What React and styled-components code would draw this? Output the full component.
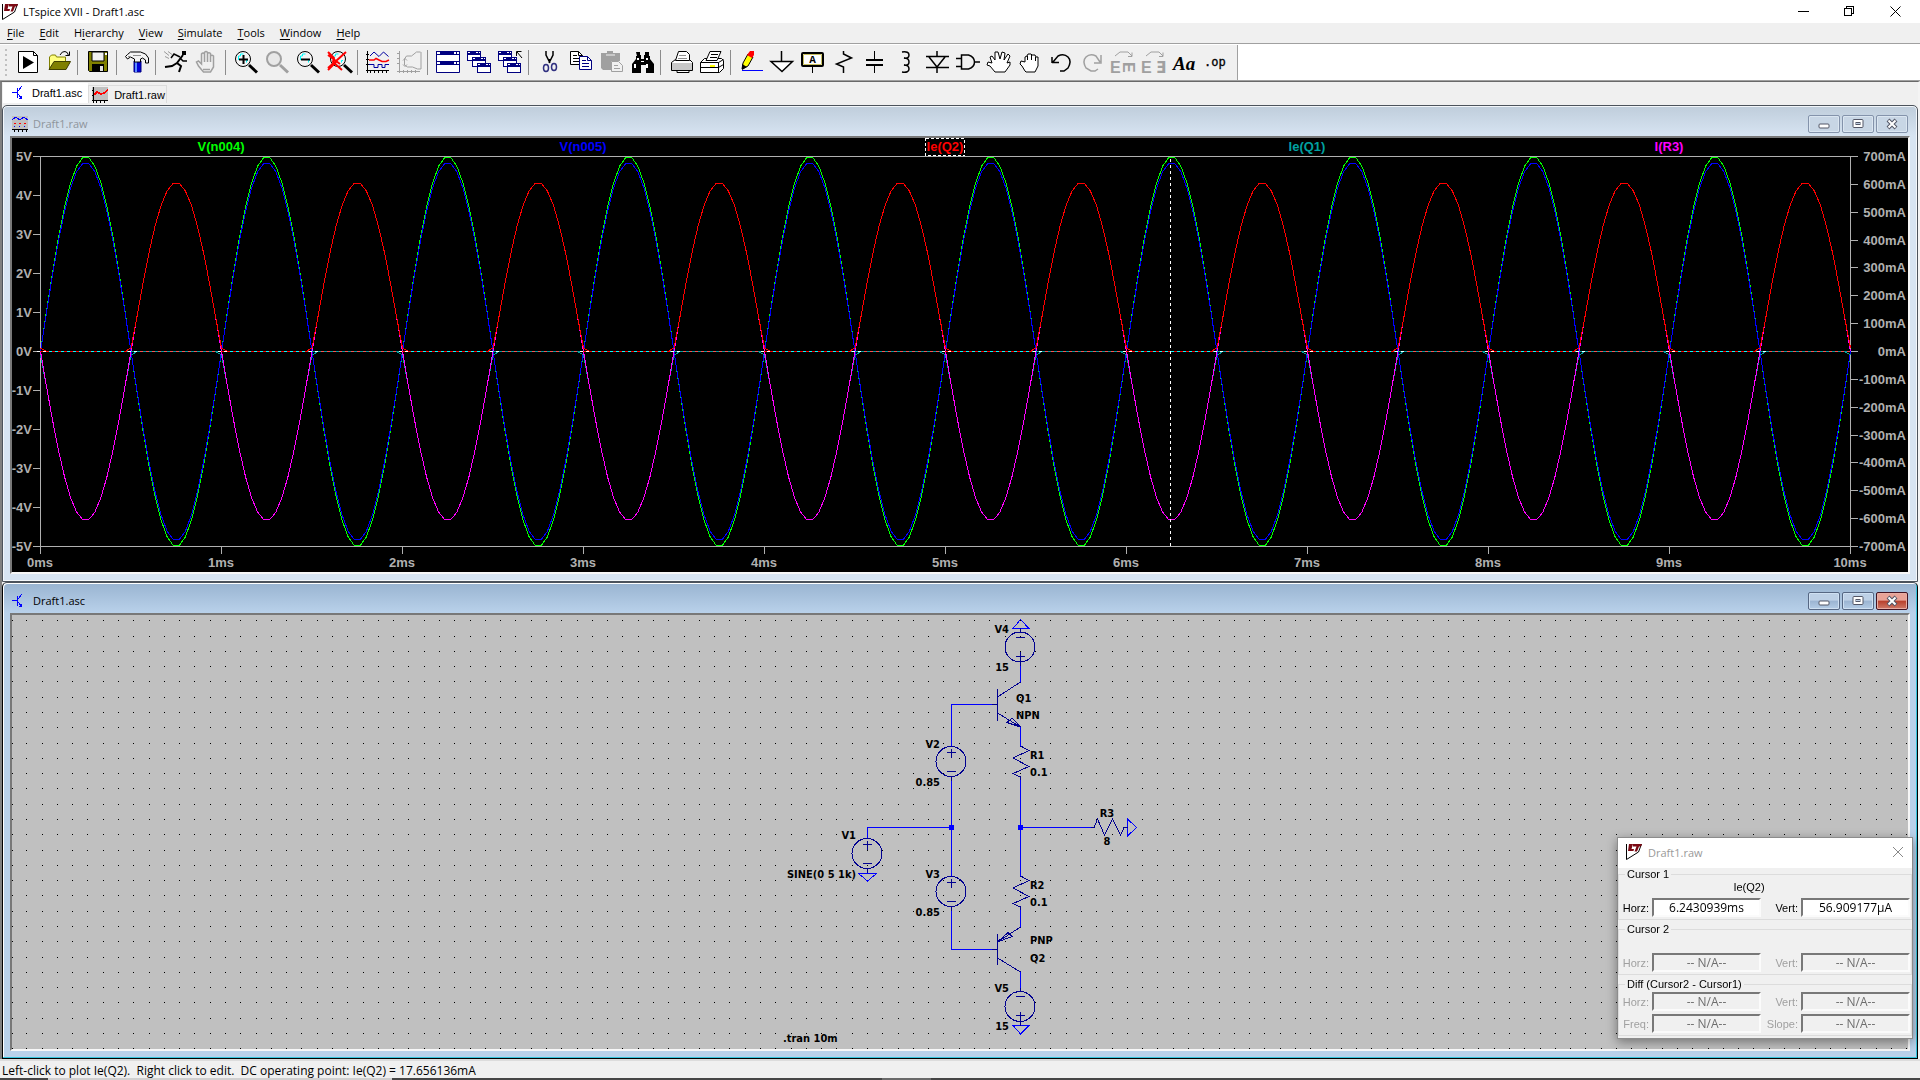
import React, { useLayoutEffect, useRef, useState } from 'react';
import styled, { createGlobalStyle, css } from 'styled-components';

const GlobalStyle = createGlobalStyle`
	* {
		box-sizing: border-box;
	}

	body {
		margin: 0;
		background: #f0f0f0;
		color: #000;
		font-family: 'Open Sans', 'Noto Sans', sans-serif;
		font-size: 12px;
	}

	button {
		padding: 0;
		border: 0;
		background: none;
		color: inherit;
		font: inherit;
	}

	svg {
		display: block;
	}
`;

const Shell = styled.div`
	display: flex;
	flex-direction: column;
	height: 100vh;
	min-height: 600px;
	overflow: hidden;
`;

const AppTitle = styled.header`
	display: flex;
	align-items: center;
	height: 23px;
	padding: 0 2px;
	gap: 5px;
	background: #fff;
`;

const TitleText = styled.h1`
	flex: 1;
	margin: 0;
	font-size: 11px;
	font-weight: 400;
`;

const CaptionButton = styled.button`
	display: flex;
	align-items: center;
	justify-content: center;
	width: 46px;
	height: 21px;
	margin-right: ${(props) => (props.$close ? '0' : '-5px')};
`;

const MenuBar = styled.nav`
	display: flex;
	gap: 1px;
	height: 21px;
	border-bottom: 1px solid #a0a0a0;
`;

const MenuItem = styled.button`
	padding: 0 7px;
	font-size: 11px;
	line-height: 18px;

	u {
		text-underline-offset: 2px;
	}
`;

const ToolbarRow = styled.div`
	display: flex;
	height: 37px;
	border-top: 1px solid #fff;
	border-bottom: 1px solid #a0a0a0;
	background: #fff;
`;

const Toolbar = styled.div`
	display: flex;
	align-items: center;
	padding-right: 6px;
	border-right: 1px solid #a0a0a0;
	background: #f0f0f0;
`;

const Grip = styled.div`
	width: 2px;
	height: 28px;
	margin: 0 5px;
	background: repeating-linear-gradient(#c0c0c0 0 2px, transparent 2px 5px);
`;

const Separator = styled.div`
	width: 1px;
	height: 25px;
	margin: 0 4px 0 3px;
	background: #8c8c8c;
`;

const ToolButton = styled.button`
	display: flex;
	align-items: center;
	justify-content: center;
	width: 31px;
	height: 31px;

	svg {
		overflow: visible;
	}
`;

const Workspace = styled.main`
	display: flex;
	flex: 1;
	flex-direction: column;
	min-height: 0;
	border: solid;
	border-width: 1px 2px 0 2px;
	border-color: #696969 #f4f4f4 #fff #808080;
`;

const TabStrip = styled.div`
	display: flex;
	align-items: flex-end;
	height: 23px;
	padding: 1px 0 2px 1px;
`;

const Tab = styled.button`
	display: flex;
	align-items: center;
	gap: ${(props) => (props.$active ? '4px' : '6px')};
	height: ${(props) => (props.$active ? '20px' : '18px')};
	padding: ${(props) => (props.$active ? '0 5px 2px 8px' : '0 1px 0 3px')};
	border: 1px solid ${(props) => (props.$active ? '#fff' : '#dcdcdc')};
	border-width: 1px 1px 0;
	background: ${(props) => (props.$active ? '#fff' : '#f0f0f0')};
	font: 11px 'Liberation Sans', Arial, sans-serif;
`;

const MdiWindow = styled.section`
	display: flex;
	flex: 1;
	flex-direction: column;
	min-height: 0;
	padding: 0 7px 7px;
	border: 1px solid ${(props) => (props.$active ? '#000' : '#4c535c')};
	border-top-color: #4c535c;
	border-radius: 5px 5px 0 0;
	box-shadow: ${(props) =>
		props.$active ? 'inset -1px -1px #35c4dc, inset 1px 1px #fff' : 'inset 0 0 0 1px #f2f6fa'};
	background: ${(props) =>
		props.$active
			? 'linear-gradient(#99b4d1, #b9d1ea 30px)'
			: 'linear-gradient(#bfcddb, #d7e4f2 30px)'};
`;

const MdiTitle = styled.div`
	display: flex;
	align-items: center;
	height: 30px;
	padding: 5px 2px 0;
	gap: 5px;
	color: ${(props) => (props.$active ? '#000' : '#8e959c')};

	h2 {
		flex: 1;
		margin: 0;
		font-size: 11px;
		font-weight: 400;
	}
`;

const MdiButton = styled.button`
	display: flex;
	align-items: center;
	justify-content: center;
	width: 32px;
	height: 18px;
	margin-left: -3px;
	border: 1px solid #8493ab;
	border-radius: 2px;
	background: #c8d6e5;
	box-shadow: inset 0 0 0 1px #dbe6f1;

	${(props) =>
		props.$active &&
		css`
			border-color: #566783;
			background: linear-gradient(#bdd0e6 45%, #9bb4d2 50%, #b4cce6);
			box-shadow: inset 0 0 0 1px #cfe0f2;
		`}

	${(props) =>
		props.$danger &&
		css`
			border-color: #431422;
			background: linear-gradient(#e8a397 45%, #b8402c 50%, #cf7a68);
			box-shadow: inset 0 0 0 1px #e7ada3;
		`}
`;

const MdiClient = styled.div`
	flex: 1;
	min-height: 0;
	overflow: hidden;
	border: 2px solid;
	border-color: #787878 #f7f7f7 #f7f7f7 #787878;
	background: ${(props) => props.$color};

	svg {
		width: 100%;
		height: 100%;
	}
`;

const StatusBar = styled.footer`
	height: 19px;
	padding-left: 2px;
	border-top: 2px solid #dcdcdc;
	line-height: 20px;
	white-space: pre;
`;

const ScreenEdge = styled.div`
	height: 2px;
	background: linear-gradient(
		90deg,
		#464646 48px,
		#d0d0d0 48px 392px,
		#464646 392px 882px,
		#6a6a6a 882px 931px,
		#464646 931px
	);
`;

const PlotText = styled.text`
	font: bold 13px 'Liberation Sans', Arial, sans-serif;
	fill: ${(props) => props.$color || '#b0b0b0'};
	text-anchor: ${(props) => props.$anchor || 'middle'};
`;

const NetText = styled.text`
	font: bold 11px 'DejaVu Sans Condensed', Tahoma, sans-serif;
	fill: #000;
	text-anchor: ${(props) => props.$anchor || 'start'};
`;

const CursorDialog = styled.aside`
	position: fixed;
	right: 7px;
	bottom: 41px;
	width: 296px;
	height: 202px;
	border: 1px solid #8c8c8c;
	background: #f0f0f0;
	box-shadow: 0 3px 10px rgba(0, 0, 0, 0.4);
`;

const DialogTitle = styled.div`
	display: flex;
	align-items: center;
	height: 30px;
	padding: 0 8px 2px;
	gap: 6px;
	background: #fff;
	color: #999;

	h2 {
		flex: 1;
		margin: 0;
		font-size: 11px;
		font-weight: 400;
	}
`;

const Group = styled.fieldset`
	min-width: 0;
	margin: 0 0 3px;
	padding: 0 0 2px;
	border: 1px solid #dcdcdc;
	font-family: 'Liberation Sans Narrow', 'Liberation Sans', sans-serif;
	font-size: 11px;

	legend {
		margin-left: 6px;
		padding: 0 2px;
		line-height: 12px;
	}
`;

const TraceName = styled.div`
	height: 16px;
	padding-right: 32px;
	line-height: 14px;
	text-align: center;
`;

const Fields = styled.div`
	display: grid;
	grid-template-columns: 29px 109px 34px 109px;
	gap: 3px;
	align-items: center;
	justify-content: end;
	padding: 2px 1px 0 0;

	label {
		color: ${(props) => (props.$off ? '#a0a0a0' : '#000')};
		text-align: right;
		white-space: nowrap;
	}

	input {
		width: 100%;
		height: 19px;
		padding: 0;
		border: 2px solid;
		border-color: #787878 #fbfbfb #fbfbfb #787878;
		background: ${(props) => (props.$off ? '#f0f0f0' : '#fff')};
		color: ${(props) => (props.$off ? '#6d6d6d' : '#000')};
		font: 12px 'Open Sans', sans-serif;
		text-align: center;
	}
`;

function useSize() {
	const ref = useRef(null);
	const [ size, setSize ] = useState({ width: 0, height: 0 });

	useLayoutEffect(() => {
		const measure = () => {
			setSize({ width: ref.current.clientWidth, height: ref.current.clientHeight });
		};
		measure();
		window.addEventListener('resize', measure);
		return () => window.removeEventListener('resize', measure);
	}, []);

	return [ ref, size ];
}

/* ---------- icons ---------- */

const lens = (
	<>
		<circle cx="10" cy="9" r="7.5" fill="#f4f4f4" stroke="#000" />
		<path d="M5.5 10v-4h2v-2h3M13.500 12.500v-2h1.500" fill="none" stroke="#0ff" />
		<path d="M16 15l8 7.500" stroke="#000" strokeWidth="3" />
	</>
);

const sheet = (x, y, color) => (
	<g transform={`translate(${x} ${y})`}>
		<path d="M.5 .5h8l4 4v9h-12z" fill="#fff" stroke={color} />
		<path d="M8.500 .5v4h4M3 4.500h4M3 7.500h7M3 10.500h7" fill="none" stroke={color} />
	</g>
);

const miniWindow = (x, y) => (
	<g transform={`translate(${x} ${y})`}>
		<rect x=".5" y=".5" width="13" height="9" fill="#fff" stroke="#000080" />
		<path d="M0 0h14v4h-14z" fill="#000080" />
		<path d="M1 1h2v1h-2zM9 1h2v1h-2zM12 1h1v1h-1z" fill="#fff" />
	</g>
);

const ICONS = {
	run: (
		<>
			<path d="M3.500 1.500h15l4 4v17h-19z" fill="#fff" stroke="#000" />
			<path d="M18.500 1.500v4h4" fill="none" stroke="#000" />
			<path d="M8 6l11 6.500l-11 6.500z" />
		</>
	),
	open: (
		<>
			<path d="M3.500 19v-12l2-2h4l1 2h9v5h-10z" fill="#ffff80" stroke="#808000" />
			<path d="M3 19.500l5-8h16.500l-4.500 8z" fill="#808000" stroke="#404000" />
			<path d="M14 5q2-4 5-3.500t3.500 4M19.500 5.500h4v-4" fill="none" stroke="#000" />
		</>
	),
	save: (
		<>
			<path d="M3.500 1.500h19v20h-18l-1-1z" fill="#808000" stroke="#000" />
			<path d="M7 2h12v9h-12z" fill="#f0f0f0" stroke="#000" />
			<path d="M7 14h12v7.500h-12z" />
			<path d="M15 16h3v5h-3z" fill="#e0e0e0" />
			<path d="M20 3h2v2h-2z" fill="#fff" />
		</>
	),
	hammer: (
		<>
			<path d="M10 11h7v11h-7z" fill="#0000d8" stroke="#000080" />
			<path d="M12 12v10" stroke="#5a8cff" strokeWidth="2" />
			<path d="M1.500 6.500l2-2 3-2.500h10l5 2 3 4v5h-3v-3l-3-2-2 1v3h-6v-3l-4-2-3 2z" fill="#f4f4f4" stroke="#000" />
			<path d="M9 5.500h8M4 6.500h3" stroke="#909090" />
		</>
	),
	runner: (
		<>
			<path d="M19 1h4v4h-4z" />
			<path d="M20 5l-6 8l4 3l-2 6M14 13l-5 3l-7 1" fill="none" stroke="#000" strokeWidth="2" />
			<path d="M17 7l-6-3l-3 4M17 8l3 3h4" fill="none" stroke="#000" strokeWidth="1.500" />
			<path d="M1 1.500l5 4M5 1.500l4 3M2 6.500l4 2" stroke="#999" />
		</>
	),
	halt: (
		<path
			d="M7.500 13v-9q1.500-2 3 0v-1.500q1.500-2 3 0v1q1.500-1.500 3 0v2.500q1.500-1.500 3 0v11l-3 5h-7l-5-6l-2-4l2-1l3 3zM10.500 4v8M13.500 3v9M16.500 5v7M9 19.500h7"
			fill="#f0f0f0"
			stroke="#a0a0a0"
			strokeWidth="1.500"
		/>
	),
	zoomIn: (
		<>
			{lens}
			<path d="M6 9.500h9M10.500 5v9" stroke="#000" strokeWidth="2" />
		</>
	),
	zoomPan: (
		<>
			<circle cx="10" cy="9" r="7" fill="#e8e8e8" stroke="#a0a0a0" strokeWidth="2" />
			<path d="M16 15l8 7.500" stroke="#a0a0a0" strokeWidth="3" />
		</>
	),
	zoomOut: (
		<>
			{lens}
			<path d="M6 9.500h9" stroke="#000" strokeWidth="2" />
		</>
	),
	zoomFit: (
		<>
			<g transform="translate(2 0)">{lens}</g>
			<path d="M2 2l6 6l-1 4l9 8M20 2l-10 9l-8 7M2 5l12 9M2 20l8-8" fill="none" stroke="#f00" strokeWidth="2" />
		</>
	),
	plot: (
		<>
			<path d="M2.500 1v22M1 20.500h23M1 4.500h3M1 9.500h3M1 14.500h3M5.500 20v3M9.500 20v3M13.500 20v3M17.500 20v3M21.500 20v3" stroke="#000" />
			<path d="M5 6l4-4l5 4.500l4.500-4.500l5 4.500M4 14.500h5v3h4v-3h4v3h3v-3h4" fill="none" stroke="#0000a0" />
			<path d="M4 10h5l2-1.500l6 3h4l3-1.500" fill="none" stroke="#f00" strokeWidth="1.500" />
		</>
	),
	fft: (
		<>
			<path d="M3.500 1v22M1 21.500h23M1 3.500h3M1 8.500h3M1 13.500h3M7.500 20v3M11.500 20v3M15.500 20v3M19.500 20v3" stroke="#a0a0a0" />
			<path d="M24.500 2h-4l-5 4h-5l-2 3v6l3 2h5l5 2h3.500v-17M7 10.500l2-2 2 2M7 14.500l2 2 2-2" fill="none" stroke="#a0a0a0" />
		</>
	),
	tile: (
		<>
			<path d="M1.500 1.500h23v21h-23z" fill="#fff" stroke="#000080" />
			<path d="M1 1h24v4h-24zM1 11h24v4h-24z" fill="#000080" />
			<path d="M2 2h3v2h-3zM19 2h2v2h-2zM22 2h2v2h-2zM2 12h3v2h-3zM19 12h2v2h-2zM22 12h2v2h-2z" fill="#fff" />
		</>
	),
	cascade: (
		<>
			{miniWindow(1, 1)}
			{miniWindow(6, 7)}
			{miniWindow(11, 13)}
		</>
	),
	closeAll: (
		<>
			{miniWindow(1, 1)}
			{miniWindow(6, 7)}
			{miniWindow(10, 13)}
			<path d="M16 0h9v7h-9z" fill="#f0f0f0" />
			<path d="M19.500 6v-4.500h5M20 2l5 6" fill="none" stroke="#000" />
		</>
	),
	cut: (
		<>
			<path d="M10 1v4l4 8M17 1v4l-4 8M13.500 9v4" fill="none" stroke="#000" strokeWidth="1.500" />
			<ellipse cx="10" cy="18" rx="2.500" ry="3.500" fill="none" stroke="#303080" strokeWidth="1.500" />
			<ellipse cx="18" cy="17" rx="2.500" ry="3.500" fill="none" stroke="#303080" strokeWidth="1.500" />
		</>
	),
	copy: (
		<>
			{sheet(3, 1, '#000')}
			{sheet(12, 6, '#000080')}
		</>
	),
	paste: (
		<>
			<path d="M3 3h6v-2h6v2h7v8h-9v9h-8l-2-2z" fill="#a0a0a0" />
			<path d="M8 5h9" stroke="#f0f0f0" />
			<path d="M13.500 11.500h7l4 4v6h-11zM16 15.500h4M16 18.500h6" fill="#f0f0f0" stroke="#a0a0a0" />
		</>
	),
	find: (
		<>
			<path d="M7 2h4v3h1v4h3v-4h1v-3h4v4h1v3l4 5v9h-8v-8h-5v8h-9v-9l4-5v-3h1z" />
			<path d="M8 8h2v2h-2zM17 8h2v2h-2zM5 14h2v4h-2zM17 14h2v4h-2zM12 11h3v1h-3z" fill="#fff" />
		</>
	),
	print: (
		<>
			<path d="M3.500 12.500l4-3h14l3 3v8h-21z" fill="#fff" stroke="#000" />
			<path d="M4 13h20v7h-20z" fill="#c8c8c8" />
			<path d="M7.500 10.500l3-9h8l3 3v6zM9 20.500h12v2h-12z" fill="#fff" stroke="#000" />
			<path d="M11 5.500h7M10 8.500h9" stroke="#909090" />
		</>
	),
	printSetup: (
		<>
			<path d="M1.500 12.500l4-4h17l2 2v8l-4 4h-19zM1.500 12.500h18v10M19.500 12.500l5-3M1.500 17.500h18l5-3" fill="#fff" stroke="#000" />
			<path d="M7 10.500l4-9h11l-4 9zM12 4.500h7M11 7.500h7" fill="#fff" stroke="#000" />
			<path d="M11 15h5v2h-5z" fill="#ff0" />
		</>
	),
	wire: (
		<>
			<path d="M4 19l1-6l5-9l5 3l-5 9z" fill="#ff0" stroke="#000" />
			<path d="M4 20v-6l5 3z" />
			<path d="M9 5l3-4h4v4l-2 3z" fill="#f00" />
			<path d="M4 20.500h21" stroke="#00f" />
		</>
	),
	ground: (
		<path d="M12.500 1v10M2 11.500h21.500l-10.500 10z" fill="#fff" stroke="#000" strokeWidth="1.500" />
	),
	label: (
		<>
			<rect x="2" y="3" width="21" height="13" rx="1" fill="#fff" stroke="#000" strokeWidth="2" />
			<path d="M3.500 4.500h18v10h-18z" fill="none" stroke="#c8c060" />
			<path d="M12.500 17v6" stroke="#000" />
			<text x="12.500" y="13" fontFamily="Liberation Mono" fontWeight="700" fontSize="11" textAnchor="middle">A</text>
		</>
	),
	resistor: <path d="M12.500 1v3l8 4l-15 6l7 3v6" fill="none" stroke="#000" strokeWidth="1.500" />,
	capacitor: (
		<>
			<path d="M12.500 1v9M12.500 15v8" stroke="#000" />
			<path d="M4 10h17M4 15h17" stroke="#000" strokeWidth="2" />
		</>
	),
	inductor: (
		<path d="M9 2q7-1 7 3t-5 3q5 0 5 4t-5 3q5 0 5 4t-7 3" fill="none" stroke="#000" strokeWidth="1.500" />
	),
	diode: <path d="M13 1v5M2 6.500h23M5 7l8 10l8-10M2 17.500h23M13 17v6" fill="none" stroke="#000" strokeWidth="1.500" />,
	gate: (
		<path d="M6.500 5h7q6 2 6 7t-6 7h-7zM1 8.500h5M1 16.500h5M20 12h5" fill="none" stroke="#000" strokeWidth="1.500" />
	),
	move: (
		<path
			d="M9 22l-5-6l-3-1l1-3l4 1l-2-6l2-1l3 4v-8h3l2 7l2-7l3 1l-1 7l4-6l2 2l-3 7l3-1v3l-5 7h-10z"
			fill="#fff"
			stroke="#000"
		/>
	),
	drag: (
		<path
			d="M8 21l-3-5l-2-2l1-3l4 1v-5l2-1l1-2h3l1 1h3l1 2h2v9l-3 6h-9zM10.500 6v4M14.500 5v5M18.500 7v4"
			fill="#fff"
			stroke="#000"
		/>
	),
	undo: (
		<path d="M4 13v-6M4 12.500h7M5 12l5-6q6-3 10 1t0 11l-4 3h-4" fill="none" stroke="#000" strokeWidth="1.500" />
	),
	redo: (
		<path d="M22 5v8h-7M21 12l-4-6q-6-3-10 1t0 11l5 3h4l3-2" fill="none" stroke="#a0a0a0" strokeWidth="1.500" />
	),
	rotate: (
		<>
			<path d="M5 6l5-4h8l4 4M18 6.500h4v-4" fill="none" stroke="#a0a0a0" />
			<text x="0" y="23" fontFamily="Liberation Sans" fontWeight="700" fontSize="16" fill="#a0a0a0">E</text>
			<text transform="translate(13 12) rotate(90)" fontFamily="Liberation Sans" fontWeight="700" fontSize="16" fill="#a0a0a0">E</text>
		</>
	),
	mirror: (
		<>
			<path d="M5 6l5-4h8l4 4M18 6.500h4v-4" fill="none" stroke="#a0a0a0" />
			<text x="0" y="23" fontFamily="Liberation Sans" fontWeight="700" fontSize="16" fill="#a0a0a0">E</text>
			<text x="15" y="23" fontFamily="DejaVu Sans" fontWeight="700" fontSize="15" fill="#a0a0a0">Ǝ</text>
		</>
	),
	text: (
		<text x="1" y="20" fontFamily="Liberation Serif" fontWeight="700" fontStyle="italic" fontSize="19">Aa</text>
	),
	directive: (
		<text x="1" y="16" fontFamily="DejaVu Sans Mono" fontSize="12" stroke="#000" strokeWidth=".3">.op</text>
	)
};

const TOOLS = [
	[ [ 'run', 'New Schematic' ], [ 'open', 'Open' ] ],
	[ [ 'save', 'Save' ] ],
	[ [ 'hammer', 'Control Panel' ] ],
	[ [ 'runner', 'Run' ], [ 'halt', 'Halt' ] ],
	[ [ 'zoomIn', 'Zoom In' ], [ 'zoomPan', 'Pan' ], [ 'zoomOut', 'Zoom Out' ], [ 'zoomFit', 'Zoom Fit' ] ],
	[ [ 'plot', 'Autorange' ], [ 'fft', 'Plot Settings' ] ],
	[ [ 'tile', 'Tile' ], [ 'cascade', 'Cascade' ], [ 'closeAll', 'Close All' ] ],
	[ [ 'cut', 'Cut' ], [ 'copy', 'Copy' ], [ 'paste', 'Paste' ], [ 'find', 'Find' ] ],
	[ [ 'print', 'Print' ], [ 'printSetup', 'Print Setup' ] ],
	[
		[ 'wire', 'Wire' ],
		[ 'ground', 'Ground' ],
		[ 'label', 'Label Net' ],
		[ 'resistor', 'Resistor' ],
		[ 'capacitor', 'Capacitor' ],
		[ 'inductor', 'Inductor' ],
		[ 'diode', 'Diode' ],
		[ 'gate', 'Component' ],
		[ 'move', 'Move' ],
		[ 'drag', 'Drag' ],
		[ 'undo', 'Undo' ],
		[ 'redo', 'Redo' ],
		[ 'rotate', 'Rotate' ],
		[ 'mirror', 'Mirror' ],
		[ 'text', 'Text' ],
		[ 'directive', 'SPICE Directive' ]
	]
];

function LogoIcon() {
	return (
		<svg width="16" height="16" viewBox="0 0 16 16">
			<path d="M.5 0v15.500l12-7.500l3-8" fill="none" stroke="#000" />
			<path d="M3 0h4l-1.500 5h2.500l-.5 2h-5.500zM7 0h9l-1 2.500h-2l-2 5h-2.500l2-5h-3.500z" fill="#7b0a14" />
		</svg>
	);
}

function SchematicIcon() {
	return (
		<svg width="16" height="16" viewBox="0 0 16 16" shapeRendering="crispEdges">
			<path d="M0 7.500h5M5.500 3v10M6 6l4-5M6 9l4 5M6.500 13.500h3v-3" fill="none" stroke="#00f" />
		</svg>
	);
}

function WaveIcon({ dotted }) {
	return (
		<svg width="16" height="16" viewBox="0 0 16 16" shapeRendering="crispEdges">
			<path d="M0 0h16v13h-16z" fill="#c0c0c0" />
			{dotted ? (
				<>
					<path d="M0 13.500h16M2.500 14v2M6.500 14v2M10.500 14v2M14.500 14v2" stroke="#000" />
					<path d="M0 4l4-3l4 3l4-3l4 3" fill="none" stroke="#00f" />
					<path d="M2 7.500h12" stroke="#f00" strokeDasharray="2 3" />
					<path d="M2 10.500h12" stroke="#00f" strokeDasharray="1 4" />
				</>
			) : (
				<>
					<path d="M1.500 0v16M0 13.500h16M4.500 13v3M8.500 13v3M12.500 13v3M0 3.500h2M0 8.500h2" stroke="#000" />
					<path d="M2 8l3-3l4 2l3-1l4-3" fill="none" stroke="#f00" strokeWidth="1.500" />
				</>
			)}
		</svg>
	);
}

function MdiGlyph({ kind }) {
	return (
		<svg width="14" height="12" viewBox="0 0 14 12">
			{kind === 'min' && <rect x="2" y="6" width="10" height="4" rx="1" fill="#fff" stroke="#535666" />}
			{kind === 'max' && (
				<>
					<rect x="2" y="1.500" width="10" height="8" rx="1" fill="#fff" stroke="#535666" />
					<rect x="5" y="4.500" width="4" height="2" fill="#c0d0e4" stroke="#535666" />
				</>
			)}
			{kind === 'close' && (
				<>
					<path d="M3 2l8 8M11 2l-8 8" stroke="#535666" strokeWidth="4" />
					<path d="M3.500 2.500l7 7M10.500 2.500l-7 7" stroke="#fff" strokeWidth="2" />
				</>
			)}
		</svg>
	);
}

/* ---------- waveform pane ---------- */

const TRACES = [
	{ name: 'V(n004)', color: '#00ff00' },
	{ name: 'V(n005)', color: '#0000ff' },
	{ name: 'Ie(Q2)', color: '#ff0000', selected: true },
	{ name: 'Ie(Q1)', color: '#00a0a0' },
	{ name: 'I(R3)', color: '#ff00ff' }
];

// conduction turns on smoothly around the crossover
const soft = (s) => 0.03 * Math.log(1 + Math.exp(s / 0.03));

// full scale is 1, so 5V and 700mA are both 1
const WAVES = [
	{ color: '#00ff00', fn: (s) => s },
	{ color: '#0000ff', fn: (s) => s * 0.97 },
	{ color: '#00a0a0', fn: (s) => -0.867 * soft(s) },
	{ color: '#ff00ff', fn: (s) => -0.867 * s },
	{ color: '#ff0000', fn: (s) => 0.867 * soft(-s) }
];

function WavePlot() {
	const [ ref, { width, height } ] = useSize();
	const left = 28;
	const top = 18;
	const right = width - 58;
	const bottom = height - 26;
	const plotWidth = right - left;
	const plotHeight = bottom - top;
	const zero = top + plotHeight / 2;
	const cursor = Math.round(left + plotWidth * 0.62430939) + 0.5;

	const wavePath = (fn) => {
		const points = [];
		for (let i = 0; i <= 300; i++) {
			const s = Math.sin(i / 300 * 20 * Math.PI);
			points.push(`${(left + 0.5 + i / 300 * plotWidth).toFixed(2)} ${(zero + 0.5 - fn(s) * plotHeight / 2).toFixed(2)}`);
		}
		return `M${points.join('L')}`;
	};

	const halves = [];
	for (let i = 0; i < 20; i++) {
		halves.push({ x: left + i * plotWidth / 20, positive: i % 2 === 0 });
	}

	return (
		<MdiClient $color="#000" ref={ref}>
			{width > 0 && (
				<svg role="img" aria-label="Waveforms">
					<g shapeRendering="crispEdges" fill="none" stroke="#b0b0b0">
						<path d={`M${left + 0.5} ${top}V${bottom + 8}M${right + 0.5} ${top}V${bottom + 8}`} />
						<path d={`M${left - 7} ${top + 0.5}H${right + 8}M${left - 7} ${bottom + 0.5}H${right + 8}`} />
						{Array.from({ length: 11 }, (_, i) => (
							<path
								key={i}
								d={`M${left - 7} ${top + i * plotHeight / 10 + 0.5}h7M${left + i * plotWidth / 10 + 0.5} ${bottom}v8`}
							/>
						))}
						{Array.from({ length: 15 }, (_, i) => (
							<path key={i} d={`M${right} ${Math.round(top + i * plotHeight / 14) + 0.5}h8`} />
						))}
					</g>
					<g shapeRendering="crispEdges" fill="none">
						{WAVES.map((wave) => <path key={wave.color} d={wavePath(wave.fn)} stroke={wave.color} />)}
						{halves.map((half) => (
							<g key={half.x}>
								<path d={`M${half.x} ${zero + 0.5}h${plotWidth / 20}`} stroke={half.positive ? '#f00' : '#00a0a0'} />
								<path
									d={`M${half.x + 3} ${zero + 0.5}h${plotWidth / 20 - 3}`}
									stroke={half.positive ? '#0ff' : '#ff5050'}
									strokeDasharray="3 3"
								/>
								<path d={`M${half.x + 3} ${zero + 0.5}h3M${half.x - 3} ${zero + 0.5}h3`} stroke="#fff" />
							</g>
						))}
						<path d={`M${cursor} ${top + 3}V${bottom}`} stroke="#fff" strokeDasharray="3 3" />
					</g>
					{TRACES.map((trace, i) => {
						const x = Math.round(left + plotWidth * (i + 0.5) / 5);
						return (
							<g key={trace.name}>
								<PlotText x={x} y="13" $color={trace.color}>{trace.name}</PlotText>
								{trace.selected && (
									<rect
										x={x - 19.5}
										y=".5"
										width="39"
										height="17"
										fill="none"
										stroke="#fff"
										strokeDasharray="3 2"
										shapeRendering="crispEdges"
									/>
								)}
							</g>
						);
					})}
					{Array.from({ length: 11 }, (_, i) => (
						<g key={i}>
							<PlotText x="20" y={top + 5 + i * plotHeight / 10} $anchor="end">{`${5 - i}V`}</PlotText>
							<PlotText x={left + i * plotWidth / 10} y={bottom + 21}>{`${i}ms`}</PlotText>
						</g>
					))}
					{Array.from({ length: 15 }, (_, i) => (
						<PlotText key={i} x={width - 2} y={Math.round(top + 5 + i * plotHeight / 14)} $anchor="end">
							{`${700 - i * 100}mA`}
						</PlotText>
					))}
				</svg>
			)}
		</MdiClient>
	);
}

/* ---------- schematic pane ---------- */

const WIRES = [
	'M1008.5 47V67M980 89.5H939.5V131M939.5 162V261M939.5 292V334.500H980',
	'M1008.5 112V131M1008.5 165V261M1008.5 295V312M1008.5 357V376',
	'M939.5 212.500H855.500V223M1008.5 212.500H1079',
	'M1008.5 4.500L1017 13.500H1001zM855.500 266L846.500 258.500H864.500zM1008.5 419L1001 410.500H1017zM1115.500 204V221L1124.500 212.500z'
];

const NET_LABELS = [
	[ 'V4', 997, 18, 'end' ],
	[ '15', 997, 56, 'end' ],
	[ 'Q1', 1004, 87 ],
	[ 'NPN', 1004, 104 ],
	[ 'V2', 928, 133, 'end' ],
	[ '0.85', 928, 171, 'end' ],
	[ 'R1', 1018, 144 ],
	[ '0.1', 1018, 161 ],
	[ 'R3', 1095, 202, 'middle' ],
	[ '8', 1095, 230, 'middle' ],
	[ 'V1', 844, 224, 'end' ],
	[ 'SINE(0 5 1k)', 844, 263, 'end' ],
	[ 'V3', 928, 263, 'end' ],
	[ '0.85', 928, 301, 'end' ],
	[ 'R2', 1018, 274 ],
	[ '0.1', 1018, 291 ],
	[ 'PNP', 1018, 329 ],
	[ 'Q2', 1018, 347 ],
	[ 'V5', 997, 377, 'end' ],
	[ '15', 997, 415, 'end' ],
	[ '.tran 10m', 771, 427 ]
];

function Source({ x, y, flip }) {
	const d = flip ? -1 : 1;
	return (
		<g transform={`translate(${x} ${y})`} fill="none" stroke="#000090">
			<circle r="15" />
			<path d={`M-4 ${-9 * d}H5M.5 ${-9 * d - 4}v9M-4 ${10 * d}H5`} />
			{flip && <path d="M.5 9v10M.5 -15v-4" />}
			{!flip && <path d="M.5 15v4" />}
		</g>
	);
}

function Schematic() {
	const [ ref, { width, height } ] = useSize();
	const step = 15.285;
	let dots = '';
	for (let y = 5.8; y < height; y += step) {
		for (let x = -0.5; x < width; x += step) {
			dots += `M${Math.max(0, Math.floor(x))} ${Math.floor(y)}h1v1h-1z`;
		}
	}

	return (
		<MdiClient $color="#c0c0c0" ref={ref}>
			<svg role="img" aria-label="Schematic" shapeRendering="crispEdges">
				<path d={dots} />
				<g fill="none" stroke="#0000ff">
					{WIRES.map((d) => <path key={d} d={d} />)}
				</g>
				<path d="M937 210h5v5h-5zM1006 210h5v5h-5z" fill="#0000ff" />
				<Source x={1008} y={32} flip />
				<Source x={939} y={146.5} />
				<Source x={855} y={238.5} />
				<Source x={939} y={276.5} />
				<Source x={1008} y={391.5} flip />
				<g fill="none" stroke="#000090">
					<path d="M1008.5 67L985.500 82M985.500 74V106M980 89.500H985M985.500 98L1008.500 112L995 107.500L1000 103L1008.500 112" />
					<path d="M1008.500 312L985.500 327L1000 321.500L996 317.500L985.500 327M985.500 319V350M980 334.500H985M985.500 343L1008.500 357" />
					<path d="M1008.5 131L1017 135.500L1001 143L1017 151.500L1001 158.500L1008.5 162V165" />
					<path d="M1008.5 261L1017 265.500L1001 273L1017 281.500L1001 288.500L1008.5 292V295" />
					<path d="M1079 212.500H1082L1085.500 204L1092.500 220L1100.500 204L1108.500 220L1112 212.500H1116" />
				</g>
				{NET_LABELS.map(([ text, x, y, anchor ]) => (
					<NetText key={`${x}-${y}`} x={x} y={y} $anchor={anchor}>{text}</NetText>
				))}
			</svg>
		</MdiClient>
	);
}

function MdiFrame({ title, icon, active, children }) {
	return (
		<MdiWindow $active={active}>
			<MdiTitle $active={active}>
				{icon}
				<h2>{title}</h2>
				<MdiButton $active={active} aria-label="Minimize"><MdiGlyph kind="min" /></MdiButton>
				<MdiButton $active={active} aria-label="Maximize"><MdiGlyph kind="max" /></MdiButton>
				<MdiButton $active={active} $danger={active} aria-label="Close"><MdiGlyph kind="close" /></MdiButton>
			</MdiTitle>
			{children}
		</MdiWindow>
	);
}

/* ---------- cursor read-out ---------- */

function Field({ id, label, value = '-- N/A--', disabled }) {
	return (
		<>
			<label htmlFor={id}>{label}</label>
			<input id={id} type="text" defaultValue={value} disabled={disabled} />
		</>
	);
}

function Cursors() {
	return (
		<CursorDialog>
			<DialogTitle>
				<LogoIcon />
				<h2>Draft1.raw</h2>
				<button aria-label="Close">
					<svg width="12" height="12" viewBox="0 0 12 12">
						<path d="M1 1l10 10M11 1l-10 10" stroke="#888" />
					</svg>
				</button>
			</DialogTitle>
			<Group>
				<legend>Cursor 1</legend>
				<TraceName>Ie(Q2)</TraceName>
				<Fields>
					<Field id="c1-horz" label="Horz:" value="6.2430939ms" />
					<Field id="c1-vert" label="Vert:" value="56.909177µA" />
				</Fields>
			</Group>
			<Group>
				<legend>Cursor 2</legend>
				<TraceName />
				<Fields $off>
					<Field id="c2-horz" label="Horz:" disabled />
					<Field id="c2-vert" label="Vert:" disabled />
				</Fields>
			</Group>
			<Group>
				<legend>Diff (Cursor2 - Cursor1)</legend>
				<Fields $off>
					<Field id="diff-horz" label="Horz:" disabled />
					<Field id="diff-vert" label="Vert:" disabled />
					<Field id="diff-freq" label="Freq:" disabled />
					<Field id="diff-slope" label="Slope:" disabled />
				</Fields>
			</Group>
		</CursorDialog>
	);
}

// [ before, underlined, after ]
const MENUS = [
	[ '', 'F', 'ile' ],
	[ '', 'E', 'dit' ],
	[ 'H', 'i', 'erarchy' ],
	[ '', 'V', 'iew' ],
	[ '', 'S', 'imulate' ],
	[ '', 'T', 'ools' ],
	[ '', 'W', 'indow' ],
	[ '', 'H', 'elp' ]
];

export default function App() {
	return (
		<Shell>
			<GlobalStyle />
			<AppTitle>
				<LogoIcon />
				<TitleText>LTspice XVII - Draft1.asc</TitleText>
				<CaptionButton aria-label="Minimize">
					<svg width="11" height="11" shapeRendering="crispEdges"><path d="M0 5.500h11" stroke="#000" /></svg>
				</CaptionButton>
				<CaptionButton aria-label="Restore">
					<svg width="11" height="11" shapeRendering="crispEdges">
						<path d="M.5 2.500h7v7h-7zM2.500 2.500v-2h7v7h-2" fill="none" stroke="#000" />
					</svg>
				</CaptionButton>
				<CaptionButton $close aria-label="Close">
					<svg width="11" height="11"><path d="M.5 .5l10 10M10.500 .5l-10 10" stroke="#000" /></svg>
				</CaptionButton>
			</AppTitle>
			<MenuBar>
				{MENUS.map(([ before, key, after ]) => (
					<MenuItem key={before + key + after}>{before}<u>{key}</u>{after}</MenuItem>
				))}
			</MenuBar>
			<ToolbarRow>
				<Toolbar>
					<Grip />
					{TOOLS.map((group, i) => (
						<React.Fragment key={group[0][0]}>
							{i > 0 && <Separator />}
							{group.map(([ name, title ]) => (
								<ToolButton key={name} aria-label={title}>
									<svg width="25" height="25" viewBox="0 0 25 25">{ICONS[name]}</svg>
								</ToolButton>
							))}
						</React.Fragment>
					))}
				</Toolbar>
			</ToolbarRow>
			<Workspace>
				<TabStrip>
					<Tab $active><SchematicIcon />Draft1.asc</Tab>
					<Tab><WaveIcon />Draft1.raw</Tab>
				</TabStrip>
				<MdiFrame title="Draft1.raw" icon={<WaveIcon dotted />}>
					<WavePlot />
				</MdiFrame>
				<MdiFrame title="Draft1.asc" icon={<SchematicIcon />} active>
					<Schematic />
				</MdiFrame>
			</Workspace>
			<StatusBar>
				{'Left-click to plot Ie(Q2).  Right click to edit.  DC operating point: Ie(Q2) = 17.656136mA'}
			</StatusBar>
			<ScreenEdge />
			<Cursors />
		</Shell>
	);
}
